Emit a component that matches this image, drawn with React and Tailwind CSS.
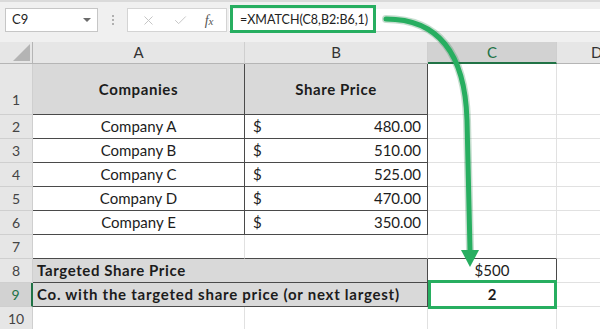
import { X, Check } from "lucide-react";

const GREEN = "#27ae60";

// grid rows of the sheet, classes are written out in full
const rows = [
  {
    n: "1",
    h: "h-[51px]",
    head: "items-end pb-1",
    cells: [
      { text: "Companies", cls: "bg-[#d9d9d9] font-bold tracking-[0.6px] justify-center border-r-[#4a4a4a] border-b-[#4a4a4a]" },
      { text: "Share Price", cls: "bg-[#d9d9d9] font-bold tracking-[0.6px] justify-center border-r-[#4a4a4a] border-b-[#4a4a4a]" },
      { text: "", cls: "border-r-[#e1e1e1] border-b-[#e1e1e1]" },
      { text: "", cls: "border-r-[#e1e1e1] border-b-[#e1e1e1]" },
    ],
  },
  ...[
    ["2", "Company A", "480.00"],
    ["3", "Company B", "510.00"],
    ["4", "Company C", "525.00"],
    ["5", "Company D", "470.00"],
    ["6", "Company E", "350.00"],
  ].map(([n, name, price]) => ({
    n,
    h: "h-[24px]",
    head: "items-center",
    cells: [
      { text: name, cls: "justify-center border-r-[#4a4a4a] border-b-[#4a4a4a]" },
      { price, cls: "justify-between pl-2 pr-1.5 border-r-[#4a4a4a] border-b-[#4a4a4a]" },
      { text: "", cls: "border-r-[#e1e1e1] border-b-[#e1e1e1]" },
      { text: "", cls: "border-r-[#e1e1e1] border-b-[#e1e1e1]" },
    ],
  })),
  {
    n: "7",
    h: "h-[24px]",
    head: "items-center",
    cells: [
      { text: "", cls: "border-r-[#e1e1e1] border-b-[#4a4a4a]" },
      { text: "", cls: "border-r-[#e1e1e1] border-b-[#4a4a4a]" },
      { text: "", cls: "border-r-[#e1e1e1] border-b-[#4a4a4a]" },
      { text: "", cls: "border-r-[#e1e1e1] border-b-[#e1e1e1]" },
    ],
  },
];

function Sheet() {
  return (
    <div className="grid grid-cols-[33px_212px_183px_129px_80px] text-[15px] text-[#1c1c1c]">
      {/* column headers */}
      <div className="h-[22px] bg-[#e6e6e6] border-r border-b border-[#b5b5b5] relative">
        <div className="absolute right-[2px] bottom-[2px] w-0 h-0 border-l-[17px] border-l-transparent border-b-[17px] border-b-[#b4b4b4]" />
      </div>
      <div className="h-[22px] bg-[#e6e6e6] border-r border-b border-r-[#cfcfcf] border-b-[#b5b5b5] flex items-center justify-center text-[#333]">A</div>
      <div className="h-[22px] bg-[#e6e6e6] border-r border-b border-r-[#cfcfcf] border-b-[#b5b5b5] flex items-center justify-center text-[#333]">B</div>
      <div className="h-[22px] bg-[#d2d2d2] border-r border-b-2 border-r-[#cfcfcf] border-b-[#217346] flex items-center justify-center text-[#217346]">C</div>
      <div className="h-[22px] bg-[#e6e6e6] border-b border-[#b5b5b5] flex items-center pl-[34px] text-[#333]">D</div>

      {rows.map((r) => (
        <Row key={r.n} r={r} />
      ))}

      {/* row 8 */}
      <RowHead n="8" />
      <div className="col-span-2 h-[24px] bg-[#d9d9d9] border-r border-b border-[#4a4a4a] flex items-center pl-1 font-bold tracking-[0.6px]">
        Targeted Share Price
      </div>
      <div className="h-[24px] border-r border-b border-[#4a4a4a] flex items-center justify-center">$500</div>
      <div className="h-[24px] border-r border-b border-[#e1e1e1]" />

      {/* row 9 */}
      <div className="h-[24px] bg-[#d2d2d2] border-r-2 border-b border-r-[#217346] border-b-[#cfcfcf] flex items-center justify-center text-[14px] text-[#217346]">
        9
      </div>
      <div className="col-span-2 h-[24px] bg-[#d9d9d9] border-r border-b border-[#4a4a4a] flex items-center pl-1 font-bold tracking-[0.75px] whitespace-nowrap">
        Co. with the targeted share price (or next largest)
      </div>
      <div className="relative h-[24px] border-r border-b border-[#e1e1e1] flex items-center justify-center font-bold">
        2
        <div className="absolute -top-[3px] -bottom-[3px] left-0 -right-px border-[3px] border-[#27ae60]" />
      </div>
      <div className="h-[24px] border-r border-b border-[#e1e1e1]" />

      {/* row 10 */}
      <RowHead n="10" />
      <div className="h-[24px] border-r border-b border-[#e1e1e1]" />
      <div className="h-[24px] border-r border-b border-[#e1e1e1]" />
      <div className="h-[24px] border-r border-b border-[#e1e1e1]" />
      <div className="h-[24px] border-r border-b border-[#e1e1e1]" />
    </div>
  );
}

function RowHead({ n, h = "h-[24px]", align = "items-center" }) {
  return (
    <div className={`${h} bg-[#e6e6e6] border-r border-b border-[#cfcfcf] flex justify-center text-[14px] text-[#444] ${align}`}>
      {n}
    </div>
  );
}

function Row({ r }) {
  return (
    <>
      <RowHead n={r.n} h={r.h} align={r.head} />
      {r.cells.map((c, i) => (
        <div key={i} className={`${r.h} border-r border-b flex items-center ${c.cls}`}>
          {c.price ? (
            <>
              <span>$</span>
              <span>{c.price}</span>
            </>
          ) : (
            c.text
          )}
        </div>
      ))}
    </>
  );
}

function Toolbar() {
  return (
    <div className="h-[42px] bg-[#f0f0f0] border-t-2 border-[#dadada] flex items-start pt-[6px] text-[13px] text-[#222]">
      {/* name box */}
      <div className="ml-[5px] w-[93px] h-[24px] bg-white border border-[#c6c6c6] flex items-center justify-between pl-[6px] pr-[6px]">
        <span>C9</span>
        <span className="w-0 h-0 border-l-[4px] border-r-[4px] border-t-[4px] border-l-transparent border-r-transparent border-t-[#6b6b6b]" />
      </div>
      {/* grip dots */}
      <div className="w-[29px] h-[24px] flex flex-col items-center justify-center gap-[2px]">
        <span className="w-[2px] h-[2px] bg-[#b0b0b0]" />
        <span className="w-[2px] h-[2px] bg-[#b0b0b0]" />
        <span className="w-[2px] h-[2px] bg-[#b0b0b0]" />
      </div>
      {/* cancel / enter / fx */}
      <div className="w-[100px] h-[24px] bg-white border border-[#d4d4d4] flex items-center justify-around px-1">
        <X size={15} strokeWidth={1.5} color="#c2c2c2" />
        <Check size={15} strokeWidth={1.5} color="#c2c2c2" />
        <span className="italic text-[14px] text-[#555] font-['Liberation_Serif',serif]">
          f<span className="text-[11px]">x</span>
        </span>
      </div>
      {/* formula bar */}
      <div className="relative flex-1 ml-[2px] mt-px h-[23px] bg-white border-b border-[#d4d4d4] flex items-center pl-[11px]">
        <span className="text-[12.5px]">=XMATCH(C8,B2:B6,1)</span>
        <div className="absolute left-[1px] w-[146px] -top-[4px] h-[28px] border-[3px] border-[#27ae60]" />
      </div>
    </div>
  );
}

export default function App() {
  return (
    <div className="relative w-[600px] h-[329px] overflow-hidden bg-white font-['Lato',sans-serif]">
      <Toolbar />
      <Sheet />
      {/* annotation arrow from the formula to the result cell */}
      <svg className="absolute inset-0 pointer-events-none" width="600" height="329" viewBox="0 0 600 329">
        <path
          d="M386 19 C 440 19, 465 55, 467 120 L 470 250"
          fill="none"
          stroke="#1e7a44"
          strokeOpacity="0.25"
          strokeWidth="8"
          strokeLinecap="round"
        />
        <path
          d="M386 19 C 440 19, 465 55, 467 120 L 470 250"
          fill="none"
          stroke={GREEN}
          strokeWidth="5"
          strokeLinecap="round"
        />
        <polygon points="461,250 479,250 470,267" fill={GREEN} />
      </svg>
    </div>
  );
}
